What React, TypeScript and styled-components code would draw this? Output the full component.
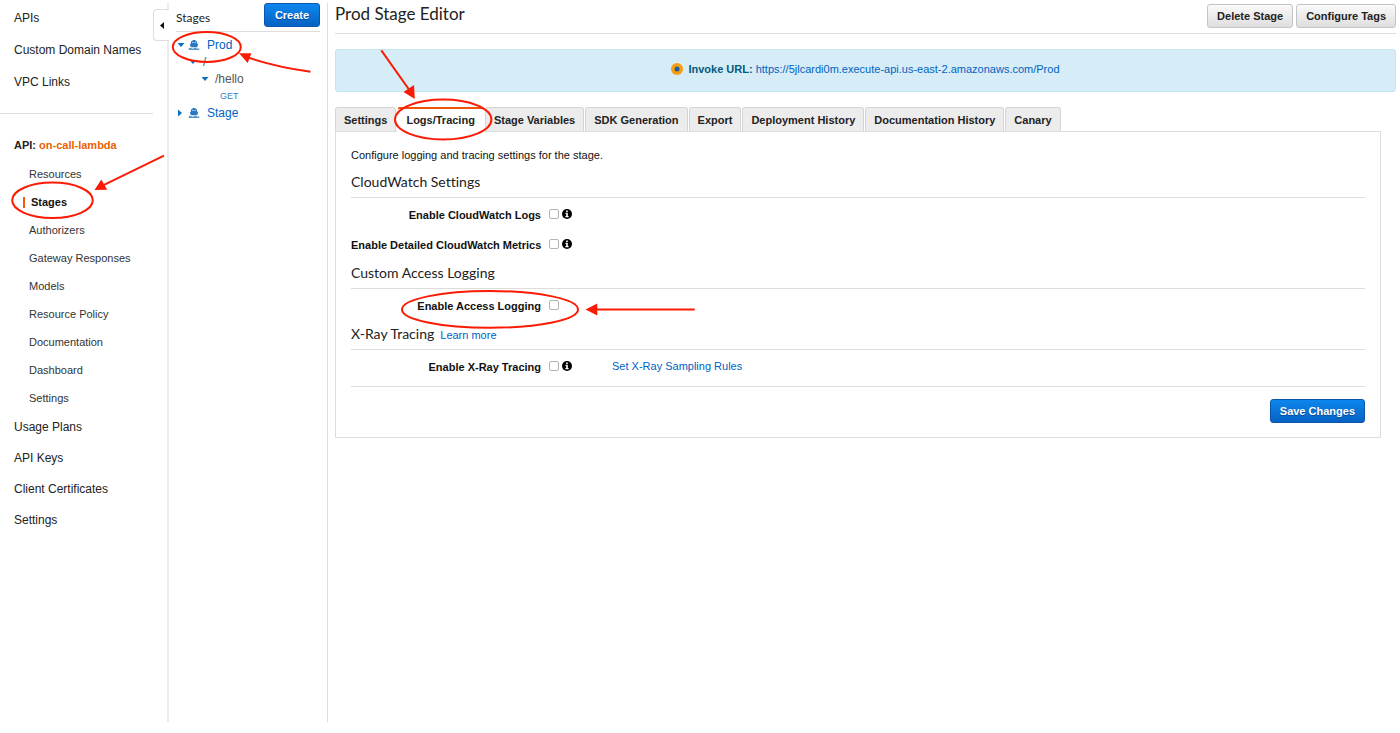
import React from "react";
import styled, { createGlobalStyle, css } from "styled-components";

const sans = `"Liberation Sans", Arial, Helvetica, sans-serif`;
const display = `Lato, "Liberation Sans", sans-serif`;

const GlobalStyle = createGlobalStyle`
  *, *::before, *::after { box-sizing: border-box; }
  body {
    margin: 0;
    background: #fff;
    color: #111;
    font-family: ${sans};
    font-size: 11px;
    line-height: 16px;
  }
  ul, h1, h2, p { margin: 0; padding: 0; font-weight: 400; }
  ul { list-style: none; }
  a { color: #0062c2; text-decoration: none; }
`;

const Page = styled.div`
  position: relative;
  display: flex;
  min-height: 100vh;
  padding: 3px 0 11px;
`;

const Sidebar = styled.nav`
  position: relative;
  flex: 0 0 169px;
  border-right: 2px solid #ebebeb;
`;

const NavLink = styled.a`
  display: block;
  padding-left: 14px;
  color: #222;
  font-size: 12px;
  line-height: 31px;
`;

const TopLinks = styled.div`
  display: flex;
  flex-direction: column;
  gap: 1px;
  margin-right: 14px;
  padding-bottom: 15px;
  border-bottom: 1px solid #ddd;
`;

const ApiName = styled.p`
  padding: 23px 0 7px 14px;
  font-weight: 700;
  color: #222;

  a { color: #eb5f07; }
`;

const SubLink = styled.a<{ $active?: boolean }>`
  display: flex;
  align-items: center;
  height: 28px;
  padding-left: 29px;
  color: #333;

  ${(p) =>
    p.$active &&
    css`
      padding-left: 23px;
      color: #111;
      font-weight: 700;

      &::before {
        content: "";
        width: 2px;
        height: 11px;
        margin-right: 6px;
        background: #eb5f07;
      }
    `}
`;

const Collapse = styled.button`
  position: absolute;
  top: 6px;
  right: -2px;
  display: flex;
  align-items: center;
  width: 16px;
  height: 32px;
  padding: 0 0 0 6px;
  border: 1px solid #ddd;
  border-right: 0;
  border-radius: 4px 0 0 4px;
  background: #fff;
`;

const StagePane = styled.section`
  flex: 0 0 159px;
  padding: 0 7px;
  border-right: 1px solid #ddd;
`;

const StageHead = styled.header`
  display: flex;
  justify-content: space-between;
  align-items: flex-start;
  height: 29px;
  margin-bottom: 4px;
  border-bottom: 1px solid #ddd;

  h2 {
    font: 400 12px/30px ${display};
    color: #222;
  }
`;

const Button = styled.button<{ $primary?: boolean }>`
  min-width: 56px;
  height: 24px;
  padding: 0 9px;
  border: 1px solid #c4c4c4;
  border-radius: 3px;
  background: linear-gradient(#fafafa, #dedede);
  color: #222;
  font: 700 11px/20px ${sans};
  white-space: nowrap;

  ${(p) =>
    p.$primary &&
    css`
      border-color: #0a56ad;
      background: linear-gradient(#0c87ee, #0662c4);
      color: #fff;
      text-shadow: 0 1px 1px #0a4a94;
    `}
`;

const TreeRow = styled.li<{ $depth: number }>`
  display: flex;
  align-items: center;
  height: 17px;
  padding-left: ${(p) => p.$depth * 12}px;
  color: #555;
  font-size: 12px;
`;

const Caret = styled.svg`
  flex: none;
  width: 8px;
  height: 8px;
  margin: 0 6px 0 1px;
  fill: #0b6fc0;
`;

const Ship = styled.svg`
  flex: none;
  width: 12px;
  height: 12px;
  margin: 0 7px 0 -3px;
  fill: #2a78c0;
`;

const Method = styled.a`
  padding-left: 8px;
  color: #3d80bd;
  font-size: 9px;
`;

const Main = styled.main`
  flex: 1;
  min-width: 0;
  padding: 0 4px 0 7px;
`;

const TitleBar = styled.header`
  display: flex;
  justify-content: space-between;
  height: 31px;
  border-bottom: 1px solid #ddd;

  h1 {
    font: 400 17px/22px ${display};
    font-variant-ligatures: none;
    color: #222;
  }
`;

const Actions = styled.div`
  display: flex;
  gap: 3px;
  padding-top: 1px;
`;

const Banner = styled.div`
  display: flex;
  justify-content: center;
  margin: 15px 0;
  padding: 11px 0 14px;
  border: 1px solid #bfe6f1;
  border-radius: 3px;
  background: #d6edf7;
  line-height: 16px;

  svg { margin: 2px 5px 0 0; }
  strong { margin-right: 3px; color: #045a80; }
`;

const Tabs = styled.div`
  display: flex;
  gap: 1px;
`;

const Tab = styled.button<{ $active?: boolean }>`
  height: 24px;
  padding: 0 8px;
  border: 1px solid #d5d5d5;
  border-bottom: 0;
  border-radius: 3px 3px 0 0;
  background: #ececec;
  color: #222;
  font: 700 11px/20px ${sans};
  white-space: nowrap;

  ${(p) =>
    p.$active &&
    css`
      height: 25px;
      margin-bottom: -1px;
      padding-bottom: 2px;
      border-color: #fff;
      border-top: 2px solid #f0560a;
      background: #fff;
    `}
`;

const Panel = styled.section`
  margin-right: 15px;
  padding: 15px 15px 14px;
  border: 1px solid #ddd;
`;

const Intro = styled.p`
  padding-bottom: 6px;
`;

const SectionHead = styled.div`
  display: flex;
  align-items: center;
  gap: 6px;
  margin: 4px 0 2px;
  padding-bottom: 6px;
  border-bottom: 1px solid #ddd;
  line-height: 18px;

  h2 {
    font: 400 14px/18px ${display};
    font-variant-ligatures: none;
    color: #222;
  }
  a { padding-top: 2px; line-height: 16px; }
`;

const Row = styled.div`
  display: flex;
  align-items: center;
  height: 30px;
  padding-bottom: 2px;

  label {
    width: 190px;
    padding-top: 2px;
    font-weight: 700;
    text-align: right;
    white-space: nowrap;
  }
  svg { margin-left: 3px; }
  a { margin-left: 40px; }
`;

const Check = styled.input`
  appearance: none;
  width: 10px;
  height: 10px;
  margin: 0 0 0 8px;
  border: 1px solid #b5b5b5;
  border-radius: 2px;
  background: #fff;
`;

const Footer = styled.footer`
  display: flex;
  justify-content: flex-end;
  margin-top: 4px;
  padding-top: 12px;
  border-top: 1px solid #ddd;
`;

const Marks = styled.svg`
  position: absolute;
  top: 0;
  left: 0;
  pointer-events: none;
`;

const subItems = [
  "Resources",
  "Stages",
  "Authorizers",
  "Gateway Responses",
  "Models",
  "Resource Policy",
  "Documentation",
  "Dashboard",
  "Settings",
];

const tabs = [
  "Settings",
  "Logs/Tracing",
  "Stage Variables",
  "SDK Generation",
  "Export",
  "Deployment History",
  "Documentation History",
  "Canary",
];

const DownCaret = () => (
  <Caret viewBox="0 0 8 8"><path d="M.5 2h7L4 6z" /></Caret>
);
const RightCaret = () => (
  <Caret viewBox="0 0 8 8"><path d="M1 .5v7l4-3.500z" /></Caret>
);
const ShipIcon = () => (
  <Ship viewBox="0 0 12 12">
    <path d="M4.500 1h3v1.200H9v2.300l1.200.6L9.200 8.300H2.800l-1-3.200L3 4.500V2.200h1.500zM4 3.200v.9l2-.7 2 .7v-.9z" />
    <path d="M.8 9.200q1.300-.9 2.600 0t2.600 0 2.600 0 2.600 0V11H.8z" opacity=".8" />
  </Ship>
);
const InfoIcon = () => (
  <svg width="10" height="10" viewBox="0 0 10 10">
    <circle cx="5" cy="5" r="5" fill="#000" />
    <path d="M4.200 1.400h1.600v1.500H4.200zM3.500 3.800h2.300v3.300h.8v1.200H3.400V7.100h.8V5h-.7z" fill="#fff" />
  </svg>
);

function Setting({ id, text, info, children }: {
  id: string; text: string; info?: boolean; children?: React.ReactNode;
}) {
  return (
    <Row>
      <label htmlFor={id}>{text}</label>
      <Check type="checkbox" id={id} />
      {info && <InfoIcon />}
      {children}
    </Row>
  );
}

export default function App() {
  return (
    <Page>
      <GlobalStyle />
      <Sidebar>
        <TopLinks>
          <NavLink href="#">APIs</NavLink>
          <NavLink href="#">Custom Domain Names</NavLink>
          <NavLink href="#">VPC Links</NavLink>
        </TopLinks>
        <ApiName>API: <a href="#">on-call-lambda</a></ApiName>
        {subItems.map((item) => (
          <SubLink href="#" key={item} $active={item === "Stages"}>{item}</SubLink>
        ))}
        <NavLink href="#">Usage Plans</NavLink>
        <NavLink href="#">API Keys</NavLink>
        <NavLink href="#">Client Certificates</NavLink>
        <NavLink href="#">Settings</NavLink>
        <Collapse aria-label="Collapse navigation">
          <svg width="4" height="7" viewBox="0 0 4 7"><path d="M4 0v7L0 3.500z" fill="#111" /></svg>
        </Collapse>
      </Sidebar>

      <StagePane>
        <StageHead>
          <h2>Stages</h2>
          <Button $primary>Create</Button>
        </StageHead>
        <ul>
          <TreeRow $depth={0}><DownCaret /><ShipIcon /><a href="#">Prod</a></TreeRow>
          <TreeRow $depth={1}><DownCaret />/</TreeRow>
          <TreeRow $depth={2}><DownCaret />/hello</TreeRow>
          <TreeRow $depth={3}><Method href="#">GET</Method></TreeRow>
          <TreeRow $depth={0}><RightCaret /><ShipIcon /><a href="#">Stage</a></TreeRow>
        </ul>
      </StagePane>

      <Main>
        <TitleBar>
          <h1>Prod Stage Editor</h1>
          <Actions>
            <Button>Delete Stage</Button>
            <Button>Configure Tags</Button>
          </Actions>
        </TitleBar>
        <Banner>
          <svg width="12" height="12" viewBox="0 0 12 12">
            <circle cx="6" cy="6" r="6" fill="#fb9d0b" />
            <circle cx="6" cy="6" r="2.500" fill="#1a5fae" />
          </svg>
          <strong>Invoke URL:</strong>
          <a href="#">https://5jlcardi0m.execute-api.us-east-2.amazonaws.com/Prod</a>
        </Banner>
        <Tabs role="tablist">
          {tabs.map((t) => (
            <Tab key={t} role="tab" aria-selected={t === "Logs/Tracing"} $active={t === "Logs/Tracing"}>{t}</Tab>
          ))}
        </Tabs>
        <Panel>
          <Intro>Configure logging and tracing settings for the stage.</Intro>
          <SectionHead><h2>CloudWatch Settings</h2></SectionHead>
          <Setting id="cw-logs" text="Enable CloudWatch Logs" info />
          <Setting id="cw-metrics" text="Enable Detailed CloudWatch Metrics" info />
          <SectionHead><h2>Custom Access Logging</h2></SectionHead>
          <Setting id="access-logging" text="Enable Access Logging" />
          <SectionHead><h2>X-Ray Tracing</h2><a href="#">Learn more</a></SectionHead>
          <Setting id="xray" text="Enable X-Ray Tracing" info>
            <a href="#">Set X-Ray Sampling Rules</a>
          </Setting>
          <Footer><Button $primary>Save Changes</Button></Footer>
        </Panel>
      </Main>

      <Marks width="720" height="340" viewBox="0 0 720 340" aria-hidden="true">
        <g fill="none" stroke="#fb1b04" strokeWidth="2">
          <ellipse cx="206.800" cy="46.900" rx="34" ry="15" />
          <ellipse cx="52.500" cy="200.300" rx="40.300" ry="17.700" />
          <ellipse cx="443.200" cy="119.500" rx="48.200" ry="20" />
          <ellipse cx="490" cy="309.400" rx="88" ry="18.400" />
          <path d="M248 57.500Q276 67 310.500 71.700M164 155.700L103 185.300M381.300 50.300L409 89.500M694.700 309.500H596" />
        </g>
        <path
          fill="#fb1b04"
          d="M239 53.300L251.300 53.300L247.700 63zM94.500 190L101.300 179.500L107.200 189.700zM414.800 99L403.500 92L414 85zM585.500 309.500L597.300 303.500V315.500z"
        />
      </Marks>
    </Page>
  );
}
